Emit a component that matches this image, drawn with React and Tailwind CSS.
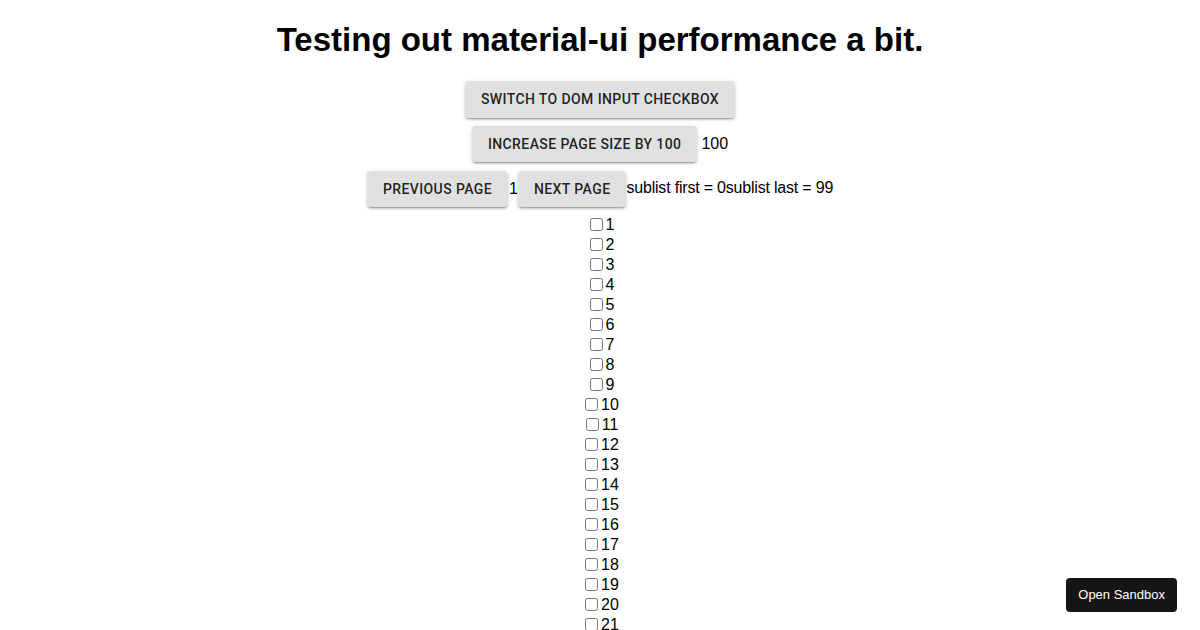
import React from "react";

const btn =
  "inline-flex items-center justify-center h-[36.5px] px-4 min-w-[64px] rounded bg-[#e0e0e0] text-[rgba(0,0,0,0.87)] text-[14px] font-medium uppercase tracking-[0.4px] leading-[1.75] shadow-[0px_3px_1px_-2px_rgba(0,0,0,0.2),0px_2px_2px_0px_rgba(0,0,0,0.14),0px_1px_5px_0px_rgba(0,0,0,0.12)] [font-family:Roboto,sans-serif]";

export default function App() {
  const items = Array.from({ length: 21 }, (_, i) => i + 1);
  return (
    <div className="min-h-[630px] bg-white text-black [font-family:'Liberation_Sans',Arial,sans-serif] text-[16px] overflow-hidden h-[630px] relative">
      <h1 className="text-center text-[33px] font-bold mt-[21px] mb-[23px] leading-[37px] [font-family:'Liberation_Sans',Arial,sans-serif]">
        Testing out material-ui performance a bit.
      </h1>
      <div className="flex justify-center items-center">
        <button className={btn}>Switch to DOM input checkbox</button>
      </div>
      <div className="flex justify-center items-center mt-2">
        <button className={btn}>Increase page size by 100</button>
        <span className="ml-1">100</span>
      </div>
      <div className="flex justify-center items-center mt-[8.5px]">
        <button className={btn}>Previous page</button>
        <span className="ml-[1px]">1</span>
        <button className={btn}>Next page</button>
        <span className="tracking-[-0.2px] -mt-[1px]">sublist first = 0sublist last = 99</span>
      </div>
      <div className="mt-[7px] flex flex-col items-center">
        {items.map((n) => (
          <div key={n} className="h-5 flex items-center">
            <input type="checkbox" className="m-0 mr-[3px] ml-[4px] w-[13px] h-[13px]" />
            <span className="leading-5 mt-[2px]">{n}</span>
          </div>
        ))}
      </div>
      <div className="absolute right-[23px] bottom-[18px] bg-[#151515] text-white rounded text-[13px] px-[12px] h-[34px] flex items-center [font-family:'Liberation_Sans',Arial,sans-serif]">
        Open Sandbox
      </div>
    </div>
  );
}
